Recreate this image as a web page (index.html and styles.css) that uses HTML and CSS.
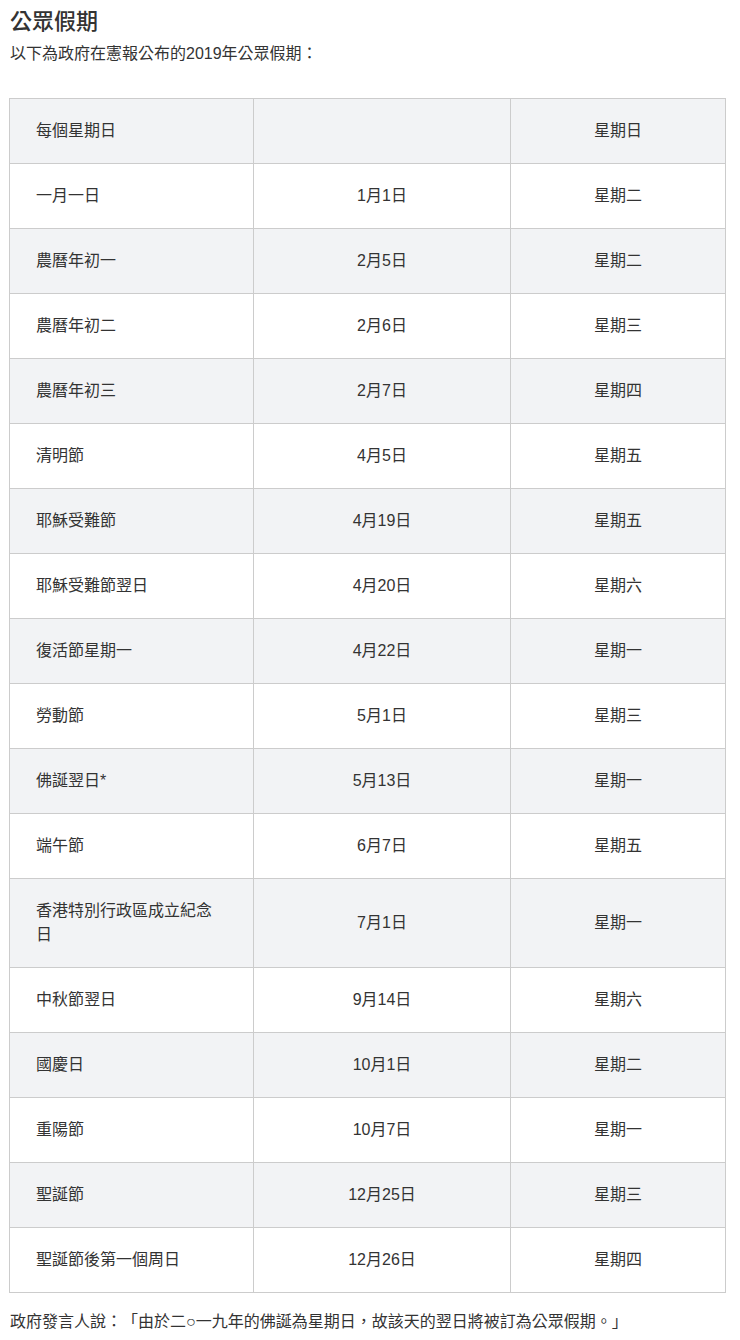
FILE: index.html
```html
<!DOCTYPE html>
<html lang="zh-Hant">
<head>
<meta charset="utf-8">
<title>公眾假期</title>
<link rel="stylesheet" href="styles.css">
</head>
<body>
<h1 class="title">公眾假期</h1>
<p class="intro">以下為政府在憲報公布的2019年公眾假期：</p>
<table class="holidays">
<colgroup><col class="c1"><col class="c2"><col class="c3"></colgroup>
<tbody>
<tr><td>每個星期日</td><td></td><td>星期日</td></tr>
<tr><td>一月一日</td><td>1月1日</td><td>星期二</td></tr>
<tr><td>農曆年初一</td><td>2月5日</td><td>星期二</td></tr>
<tr><td>農曆年初二</td><td>2月6日</td><td>星期三</td></tr>
<tr><td>農曆年初三</td><td>2月7日</td><td>星期四</td></tr>
<tr><td>清明節</td><td>4月5日</td><td>星期五</td></tr>
<tr><td>耶穌受難節</td><td>4月19日</td><td>星期五</td></tr>
<tr><td>耶穌受難節翌日</td><td>4月20日</td><td>星期六</td></tr>
<tr><td>復活節星期一</td><td>4月22日</td><td>星期一</td></tr>
<tr><td>勞動節</td><td>5月1日</td><td>星期三</td></tr>
<tr><td>佛誕翌日*</td><td>5月13日</td><td>星期一</td></tr>
<tr><td>端午節</td><td>6月7日</td><td>星期五</td></tr>
<tr><td>香港特別行政區成立紀念日</td><td>7月1日</td><td>星期一</td></tr>
<tr><td>中秋節翌日</td><td>9月14日</td><td>星期六</td></tr>
<tr><td>國慶日</td><td>10月1日</td><td>星期二</td></tr>
<tr><td>重陽節</td><td>10月7日</td><td>星期一</td></tr>
<tr><td>聖誕節</td><td>12月25日</td><td>星期三</td></tr>
<tr><td>聖誕節後第一個周日</td><td>12月26日</td><td>星期四</td></tr>
</tbody>
</table>
<p class="note">政府發言人說：「由於二○一九年的佛誕為星期日，故該天的翌日將被訂為公眾假期。」</p>
</body>
</html>
```
FILE: styles.css
```css
html, body {
  margin: 0;
  padding: 0;
  background: #ffffff;
}
body {
  padding: 7px 10px 0 10px;
  color: #333333;
  font-family: "Liberation Sans", Arial, "Noto Sans CJK TC", sans-serif;
  font-size: 16px;
  line-height: 24px;
  text-spacing-trim: space-all;
}
.title {
  margin: 0;
  font-size: 22px;
  line-height: 30px;
  font-weight: 500;
}
.intro {
  margin: 5px 0 0 0;
}
.holidays {
  margin-top: 32px;
  border-collapse: collapse;
  table-layout: fixed;
  width: 716px;
  margin-left: -1px;
}
.c1 { width: 244px; }
.c2 { width: 257px; }
.c3 { width: 215px; }
.holidays td {
  border: 1px solid #cccccc;
  padding: 20px 30px 20px 26px;
  vertical-align: middle;
  text-align: center;
}
.holidays td:first-child {
  text-align: left;
}
.holidays td:nth-child(2),
.holidays td:nth-child(3) {
  padding-left: 10px;
  padding-right: 10px;
}
.holidays tr:nth-child(odd) td {
  background: #f2f3f5;
}
.note {
  margin: 17px 0 0 0;
}
```
